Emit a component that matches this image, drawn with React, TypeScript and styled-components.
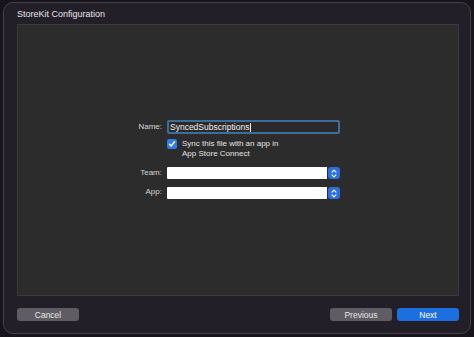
import React, { FC } from 'react';
import styled, { createGlobalStyle } from 'styled-components';

const GlobalStyle = createGlobalStyle`
  html, body {
    margin: 0;
    padding: 0;
    background: #17151b;
    font-family: "Liberation Sans", Arial, sans-serif;
    -webkit-font-smoothing: antialiased;
  }
`;

const Window = styled.div`
  box-sizing: border-box;
  margin: 2px 0 0 3px;
  width: 468px;
  height: 332px;
  border: 1px solid #46424c;
  border-radius: 10px;
  background: #221f28;
  display: flex;
  flex-direction: column;
`;

const TitleBar = styled.div`
  height: 21px;
  display: flex;
  align-items: center;
  padding-left: 13px;
  font-size: 9px;
  color: #e6e4ea;
`;

const Panel = styled.div`
  box-sizing: border-box;
  margin: 0 11px 0 13px;
  height: 272px;
  background: #2c2c2c;
  border: 1px solid #3a3a3c;
  display: grid;
  grid-template-columns: 144px 173px;
  column-gap: 5px;
  align-content: start;
  padding-top: 95px;
`;

const Label = styled.div<{ top?: number }>`
  text-align: right;
  font-size: 8px;
  color: #d6d6d6;
  line-height: 14px;
  margin-top: ${p => p.top || 0}px;
`;

const Cell = styled.div<{ top?: number }>`
  margin-top: ${p => p.top || 0}px;
`;

const NameField = styled.div`
  box-sizing: border-box;
  height: 14px;
  border: 2px solid #3e6d99;
  border-radius: 2px;
  background: #2a2a2a;
  display: flex;
  align-items: center;
  padding-left: 1px;
  font-size: 8.5px;
  color: #f2f2f2;
`;

const Caret = styled.span`
  display: inline-block;
  width: 1px;
  height: 9px;
  background: #f2f2f2;
  margin-left: 1px;
`;

const CheckRow = styled.div`
  display: flex;
  align-items: flex-start;
  gap: 5px;
  margin-top: 5px;
`;

const Box = styled.div`
  width: 10px;
  height: 10px;
  border-radius: 2px;
  background: #2f7de6;
  display: flex;
  align-items: center;
  justify-content: center;
  flex-shrink: 0;
`;

const CheckText = styled.div`
  font-size: 8px;
  line-height: 9.5px;
  color: #e4e4e4;
`;

const Popup = styled.div`
  height: 12px;
  display: flex;
  align-items: stretch;
`;

const PopupField = styled.div`
  flex: 1;
  background: #ffffff;
  border-radius: 1px 0 0 1px;
`;

const Stepper = styled.div`
  width: 12px;
  margin-left: 1px;
  background: #2b6fe0;
  border-radius: 3px;
  display: flex;
  align-items: center;
  justify-content: center;
`;

const Footer = styled.div`
  flex: 1;
  display: flex;
  align-items: flex-start;
  padding: 12px 11px 0 13px;
  gap: 5px;
`;

const Button = styled.div<{ primary?: boolean }>`
  width: 62px;
  height: 13px;
  border-radius: 3px;
  background: ${p => (p.primary ? '#1c6fdf' : '#5f5c64')};
  color: ${p => (p.primary ? '#ffffff' : '#e6e6e6')};
  font-size: 8.5px;
  display: flex;
  align-items: center;
  justify-content: center;
`;

const Spacer = styled.div`
  flex: 1;
`;

const Chevrons: FC = () => (
  <svg width="6" height="9" viewBox="0 0 6 9">
    <path d="M1 3.2 L3 1.2 L5 3.2 M1 5.8 L3 7.8 L5 5.8" fill="none" stroke="#fff" strokeWidth="1.1" strokeLinecap="round" strokeLinejoin="round" />
  </svg>
);

const App: FC = () => (
  <>
    <GlobalStyle />
    <Window>
      <TitleBar>StoreKit Configuration</TitleBar>
      <Panel>
        <Label>Name:</Label>
        <Cell>
          <NameField>
            SyncedSubscriptions
            <Caret />
          </NameField>
        </Cell>
        <div />
        <CheckRow>
          <Box>
            <svg width="8" height="8" viewBox="0 0 8 8">
              <path d="M1.5 4.2 L3.2 6 L6.5 1.8" fill="none" stroke="#fff" strokeWidth="1.4" strokeLinecap="round" strokeLinejoin="round" />
            </svg>
          </Box>
          <CheckText>
            Sync this file with an app in
            <br />
            App Store Connect
          </CheckText>
        </CheckRow>
        <Label top={8}>Team:</Label>
        <Cell top={9}>
          <Popup>
            <PopupField />
            <Stepper>
              <Chevrons />
            </Stepper>
          </Popup>
        </Cell>
        <Label top={5}>App:</Label>
        <Cell top={7}>
          <Popup>
            <PopupField />
            <Stepper>
              <Chevrons />
            </Stepper>
          </Popup>
        </Cell>
      </Panel>
      <Footer>
        <Button>Cancel</Button>
        <Spacer />
        <Button>Previous</Button>
        <Button primary>Next</Button>
      </Footer>
    </Window>
  </>
);

export default App;
